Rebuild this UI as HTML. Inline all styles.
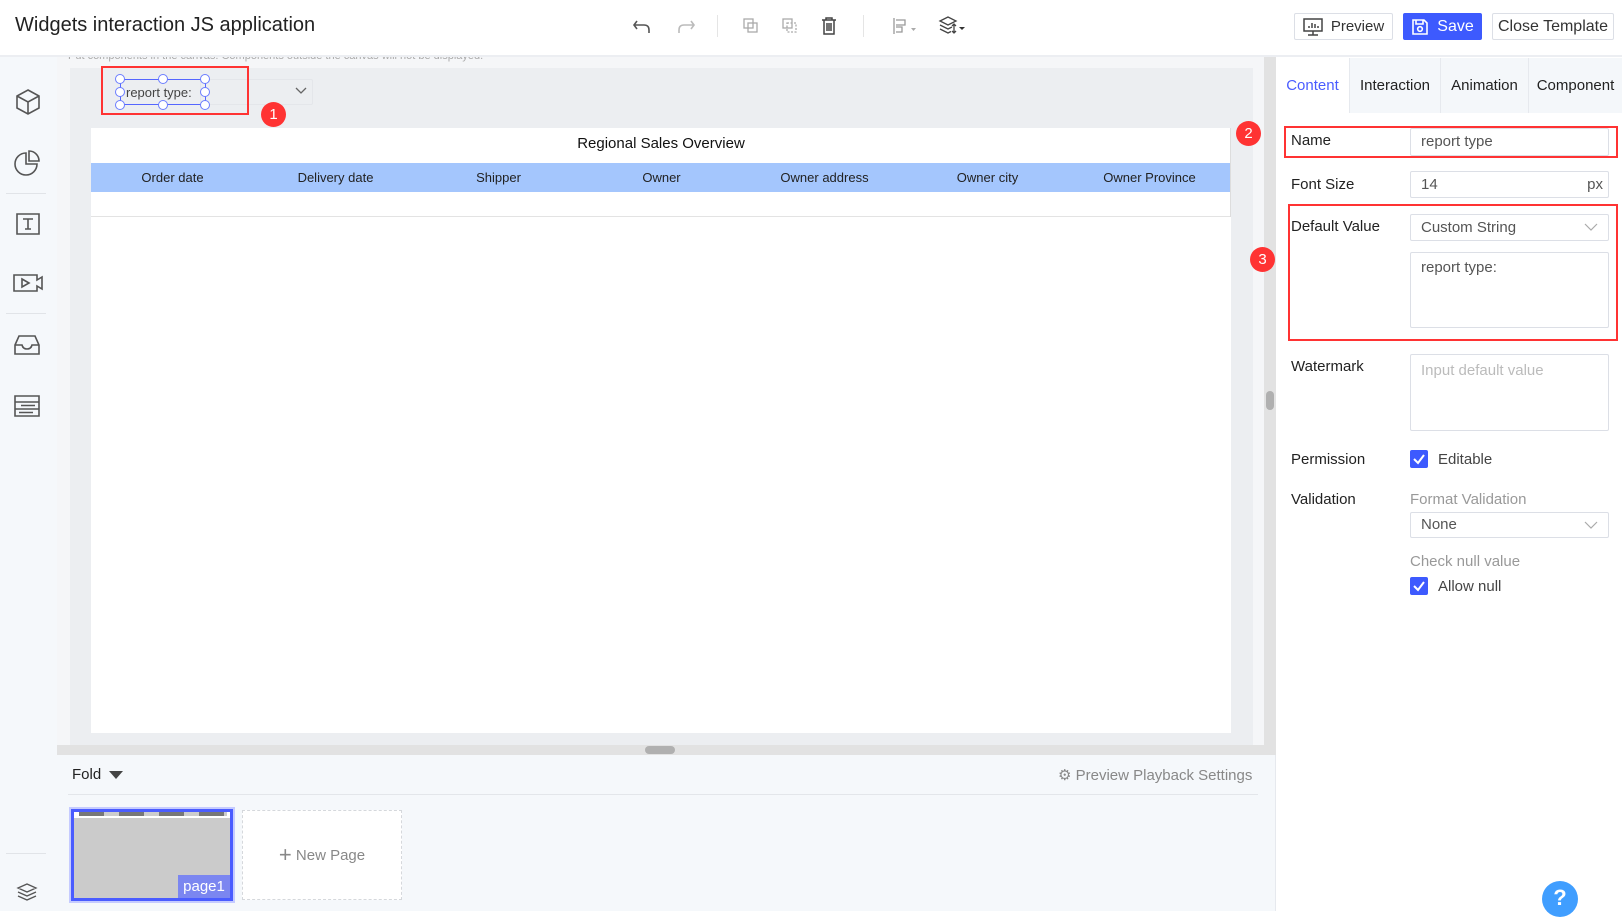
<!DOCTYPE html>
<html><head><meta charset="utf-8"><style>
*{box-sizing:border-box;margin:0;padding:0}
body{width:1622px;height:911px;overflow:hidden;position:relative;background:#fff;font-family:"Liberation Sans",sans-serif;color:#222;font-size:14px}
.a{position:absolute}
.ic{position:absolute;stroke:#555;fill:none;stroke-width:1.6}
.btn{position:absolute;top:13px;height:27px;border:1px solid #dcdfe6;border-radius:2px;font-size:15px;display:flex;align-items:center;justify-content:center;color:#333}
.lbl{position:absolute;left:1291px;font-size:15px;color:#222}
.inp{position:absolute;left:1410px;width:199px;border:1px solid #dcdfe6;border-radius:2px;background:#fff;font-size:15px;color:#555;padding-left:10px}
.th{position:absolute;top:163px;height:29px;width:163px;text-align:center;line-height:29px;font-size:13px;color:#222}
.cb{position:absolute;left:1410px;width:18px;height:18px;background:#3d5afe;border-radius:2px}
.badge{position:absolute;width:25px;height:25px;border-radius:50%;background:#f33;color:#fff;font-size:15px;text-align:center;line-height:25px}
.hd{position:absolute;width:10px;height:10px;border:1.5px solid #6b7dff;border-radius:50%;background:#fff}
</style></head><body>
<!-- canvas area -->
<div class="a" style="left:57px;top:57px;width:1208px;height:698px;background:#f5f6f8"></div>
<div class="a" style="left:68px;top:50px;font-size:11px;color:#aaa;white-space:nowrap">Put components in the canvas. Components outside the canvas will not be displayed.</div>
<!-- header -->
<div class="a" style="left:0;top:0;width:1622px;height:57px;border-bottom:2px solid #eceef2;background:#fff"></div>
<div class="a" style="left:15px;top:14px;font-size:20px;color:#222">Widgets interaction JS application</div>
<svg class="ic" style="left:632px;top:16px" width="22" height="20"><path d="M5 5 L2 9 L5 13 M2 9 H12 Q17 9 17 14 V17"/></svg>
<svg class="ic" style="left:674px;top:16px;stroke:#bbb" width="22" height="20"><path d="M17 5 L20 9 L17 13 M20 9 H10 Q5 9 5 14 V17"/></svg>
<div class="a" style="left:717px;top:15px;width:1px;height:22px;background:#e5e5e5"></div>
<svg class="ic" style="left:742px;top:17px;stroke:#aaa;stroke-width:1.3" width="18" height="18"><rect x="2" y="2" width="9" height="9"/><rect x="6" y="6" width="9" height="9"/></svg>
<svg class="ic" style="left:781px;top:17px;stroke:#aaa;stroke-width:1.3" width="18" height="18"><rect x="2" y="2" width="9" height="9"/><rect x="6" y="6" width="9" height="9" stroke-dasharray="2 1.5"/></svg>
<svg class="ic" style="left:820px;top:16px;stroke:#444;stroke-width:1.5" width="18" height="20"><path d="M2 4 H16 M6 4 V2 H12 V4 M4 4 V18 H14 V4 M7 7 V15 M9 7 V15 M11 7 V15"/></svg>
<div class="a" style="left:863px;top:15px;width:1px;height:22px;background:#e5e5e5"></div>
<svg class="ic" style="left:892px;top:17px;stroke:#999;stroke-width:1.3" width="26" height="18"><path d="M2 1 V17 M4 3 H13 V8 H4 M4 10 H10 V15 H4"/><path d="M19 11 L24 11 L21.5 14 Z" fill="#aaa" stroke="none"/></svg>
<svg class="ic" style="left:938px;top:15px;stroke:#444;stroke-width:1.3" width="30" height="22"><path d="M2 6 L10 2 L18 6 L10 10 Z M2 10 L10 14 L14 12 M2 14 L10 18 L13 16.5 M16 9 V18 M14 11 L16 9 L18 11 M14 16 L16 18 L18 16"/><path d="M21 12 L27 12 L24 15 Z" fill="#333" stroke="none"/></svg>
<div class="btn" style="left:1294px;width:99px"><svg width="20" height="18" style="margin-right:8px" fill="none" stroke="#444" stroke-width="1.5"><rect x="1" y="1" width="18" height="12"/><path d="M10 13 V17 M5 17 H15 M6 10 V8 M9 10 V5 M12 10 V6 M15 10 V8" /></svg>Preview</div>
<div class="btn" style="left:1403px;width:79px;background:#3d5afe;border-color:#3d5afe;color:#fff;font-size:16px"><svg width="18" height="18" style="margin-right:8px" fill="none" stroke="#fff" stroke-width="1.6"><path d="M2 2 H13 L16 5 V16 H2 Z M5 2 V6 H12 V2"/><circle cx="9" cy="11" r="2.3"/></svg>Save</div>
<div class="btn" style="left:1492px;width:122px;font-size:16px">Close Template</div>
<!-- left sidebar -->
<div class="a" style="left:0;top:57px;width:57px;height:854px;background:#f5f8fb"></div>
<svg class="ic" style="left:14px;top:88px" width="28" height="28"><path d="M14 2 L25 8 V20 L14 26 L3 20 V8 Z M3 8 L14 14 L25 8 M14 14 V26"/></svg>
<svg class="ic" style="left:13px;top:149px" width="28" height="28"><path d="M13 4 A11 11 0 1 0 24 15 H13 Z"/><path d="M16 2 A10 10 0 0 1 26 12 H16 Z"/></svg>
<div class="a" style="left:6px;top:193px;width:40px;height:1px;background:#e1e4e8"></div>
<svg class="ic" style="left:14px;top:212px" width="28" height="24"><path d="M3 2 H25 V22 H3 Z M9 7 H19 M14 7 V17 M11 17 H17"/></svg>
<svg class="ic" style="left:12px;top:272px" width="32" height="22"><path d="M2 3 H25 V8 L30 5 V17 L25 14 V19 H2 Z M10 7 L17 11 L10 15 Z"/></svg>
<div class="a" style="left:6px;top:313px;width:40px;height:1px;background:#e1e4e8"></div>
<svg class="ic" style="left:13px;top:333px" width="28" height="24"><path d="M2 12 L6 3 H22 L26 12 V21 H2 Z M2 12 H9 Q10 16 14 16 Q18 16 19 12 H26"/></svg>
<svg class="ic" style="left:13px;top:394px" width="28" height="24"><path d="M2 2 H26 V8 H2 Z M2 8 H26 V15 H2 Z M2 15 H26 V22 H2 Z M8 11.5 H22 M6 18.5 H20"/></svg>
<div class="a" style="left:6px;top:853px;width:40px;height:1px;background:#e1e4e8"></div>
<svg class="ic" style="left:16px;top:883px;stroke-width:1.3" width="22" height="18"><path d="M2 5 L11 1 L20 5 L11 9 Z M2 9 L11 13 L20 9 M2 13 L11 17 L20 13"/></svg>
<!-- canvas -->
<div class="a" style="left:70px;top:68px;width:1183px;height:677px;background:#eceef1"></div>
<div class="a" style="left:91px;top:128px;width:1140px;height:605px;background:#fff"></div>
<div class="a" style="left:91px;top:128px;width:1140px;text-align:center;line-height:32px;font-size:15px;color:#111">Regional Sales Overview</div>
<div class="a" style="left:91px;top:163px;width:1140px;height:29px;background:#a4c6fd"></div>
<div class="th" style="left:91px">Order date</div><div class="th" style="left:254px">Delivery date</div><div class="th" style="left:417px">Shipper</div><div class="th" style="left:580px">Owner</div><div class="th" style="left:743px">Owner address</div><div class="th" style="left:906px">Owner city</div><div class="th" style="left:1068px">Owner Province</div>
<div class="a" style="left:91px;top:216px;width:1140px;height:1px;background:#e3e3e3"></div>
<div class="a" style="left:1230px;top:128px;width:1px;height:89px;background:#ddd"></div>
<!-- widget -->
<div class="a" style="left:200px;top:79px;width:113px;height:26px;border:1px solid #e4e6ea;border-radius:2px"></div>
<svg class="a" style="left:295px;top:86px" width="12" height="10" fill="none" stroke="#666" stroke-width="1.3"><path d="M1 2 L6 7 L11 2"/></svg>
<div class="a" style="left:120px;top:79px;width:86px;height:26px;border:1.5px solid #5566ff"></div>
<div class="a" style="left:126px;top:85px;font-size:13px;color:#444">report type:</div>
<div class="hd" style="left:115px;top:74px"></div><div class="hd" style="left:158px;top:74px"></div><div class="hd" style="left:200px;top:74px"></div>
<div class="hd" style="left:115px;top:87px"></div><div class="hd" style="left:200px;top:87px"></div>
<div class="hd" style="left:115px;top:100px"></div><div class="hd" style="left:158px;top:100px"></div><div class="hd" style="left:200px;top:100px"></div>
<div class="a" style="left:101px;top:66px;width:148px;height:49px;border:2.5px solid #f33"></div>
<div class="badge" style="left:261px;top:102px">1</div>
<!-- scrollbars -->
<div class="a" style="left:1264px;top:57px;width:12px;height:698px;background:#e2e2e2"></div>
<div class="a" style="left:1266px;top:391px;width:8px;height:19px;border-radius:4px;background:#b0b0b0"></div>
<div class="a" style="left:57px;top:745px;width:1207px;height:10px;background:#e2e2e2"></div>
<div class="a" style="left:645px;top:746px;width:30px;height:8px;border-radius:4px;background:#b0b0b0"></div>
<!-- bottom panel -->
<div class="a" style="left:57px;top:755px;width:1219px;height:156px;background:#f5f8fb;border-right:1px solid #e6e9ee"></div>
<div class="a" style="left:72px;top:766px;font-size:15px;color:#222">Fold</div>
<svg class="a" style="left:108px;top:770px" width="16" height="10"><path d="M1 1 H15 L8 9 Z" fill="#444"/></svg>
<div class="a" style="left:1058px;top:766px;font-size:15px;color:#888;white-space:nowrap">⚙ Preview Playback Settings</div>
<div class="a" style="left:68px;top:794px;width:1190px;height:1px;background:#e3e6ea"></div>
<div class="a" style="left:71px;top:809px;width:162px;height:92px;border:3px solid #4a5cff;background:#cbcbcb;box-shadow:0 0 0 2px #c5cbff"></div>
<div class="a" style="left:74px;top:812px;width:156px;height:6px;background:#fff"></div>
<div class="a" style="left:79px;top:812px;width:148px;height:4px;background:repeating-linear-gradient(90deg,#777 0 25px,#ccc 25px 40px)"></div>
<div class="a" style="left:178px;top:875px;width:52px;height:23px;background:#7b86f0;color:#fff;font-size:15px;text-align:center;line-height:23px">page1</div>
<div class="a" style="left:242px;top:810px;width:160px;height:90px;border:1px dashed #d5d8dc;background:#fff;text-align:center;line-height:88px;color:#888;font-size:15px"><span style="font-size:22px;vertical-align:-2px">+</span> New Page</div>
<!-- right panel -->
<div class="a" style="left:1276px;top:58px;width:346px;height:55px;background:#f4f7fa"></div>
<div class="a" style="left:1276px;top:58px;width:73px;height:55px;background:#fff;color:#4a5cff;font-size:15px;text-align:center;line-height:55px">Content</div>
<div class="a" style="left:1349px;top:58px;width:91px;height:55px;border-left:1px solid #e6e9ee;font-size:15px;text-align:center;line-height:55px">Interaction</div>
<div class="a" style="left:1440px;top:58px;width:88px;height:55px;border-left:1px solid #e6e9ee;font-size:15px;text-align:center;line-height:55px">Animation</div>
<div class="a" style="left:1528px;top:58px;width:94px;height:55px;border-left:1px solid #e6e9ee;font-size:15px;text-align:center;line-height:55px">Component</div>
<div class="lbl" style="top:132px">Name</div>
<div class="inp" style="top:128px;height:28px;line-height:26px">report type</div>
<div class="a" style="left:1284px;top:126px;width:334px;height:32px;border:2.5px solid #f33"></div>
<div class="badge" style="left:1236px;top:121px">2</div>
<div class="lbl" style="top:176px">Font Size</div>
<div class="inp" style="top:171px;height:27px;line-height:25px">14<span style="position:absolute;right:5px">px</span></div>
<div class="lbl" style="top:218px">Default Value</div>
<div class="inp" style="top:214px;height:27px;line-height:25px">Custom String<svg style="position:absolute;right:10px;top:8px" width="14" height="9" fill="none" stroke="#aaa" stroke-width="1.2"><path d="M1 1 L7 7 L13 1"/></svg></div>
<div class="inp" style="top:252px;height:76px;padding-top:6px">report type:</div>
<div class="a" style="left:1288px;top:204px;width:330px;height:137px;border:2.5px solid #f33"></div>
<div class="badge" style="left:1250px;top:247px">3</div>
<div class="lbl" style="top:358px">Watermark</div>
<div class="inp" style="top:354px;height:77px;padding-top:7px;color:#bbb">Input default value</div>
<div class="lbl" style="top:451px">Permission</div>
<div class="cb" style="top:450px"><svg width="18" height="18" fill="none" stroke="#fff" stroke-width="2"><path d="M4 9 L8 13 L14 5"/></svg></div>
<div class="a" style="left:1438px;top:451px;font-size:15px;color:#444">Editable</div>
<div class="lbl" style="top:491px">Validation</div>
<div class="a" style="left:1410px;top:491px;font-size:15px;color:#999">Format Validation</div>
<div class="inp" style="top:512px;height:26px;line-height:24px">None<svg style="position:absolute;right:10px;top:8px" width="14" height="9" fill="none" stroke="#aaa" stroke-width="1.2"><path d="M1 1 L7 7 L13 1"/></svg></div>
<div class="a" style="left:1410px;top:553px;font-size:15px;color:#999">Check null value</div>
<div class="cb" style="top:577px"><svg width="18" height="18" fill="none" stroke="#fff" stroke-width="2"><path d="M4 9 L8 13 L14 5"/></svg></div>
<div class="a" style="left:1438px;top:578px;font-size:15px;color:#444">Allow null</div>
<div class="a" style="left:1542px;top:881px;width:36px;height:36px;border-radius:50%;background:#409eff;color:#fff;font-size:22px;text-align:center;line-height:34px;font-weight:bold">?</div>
</body></html>
